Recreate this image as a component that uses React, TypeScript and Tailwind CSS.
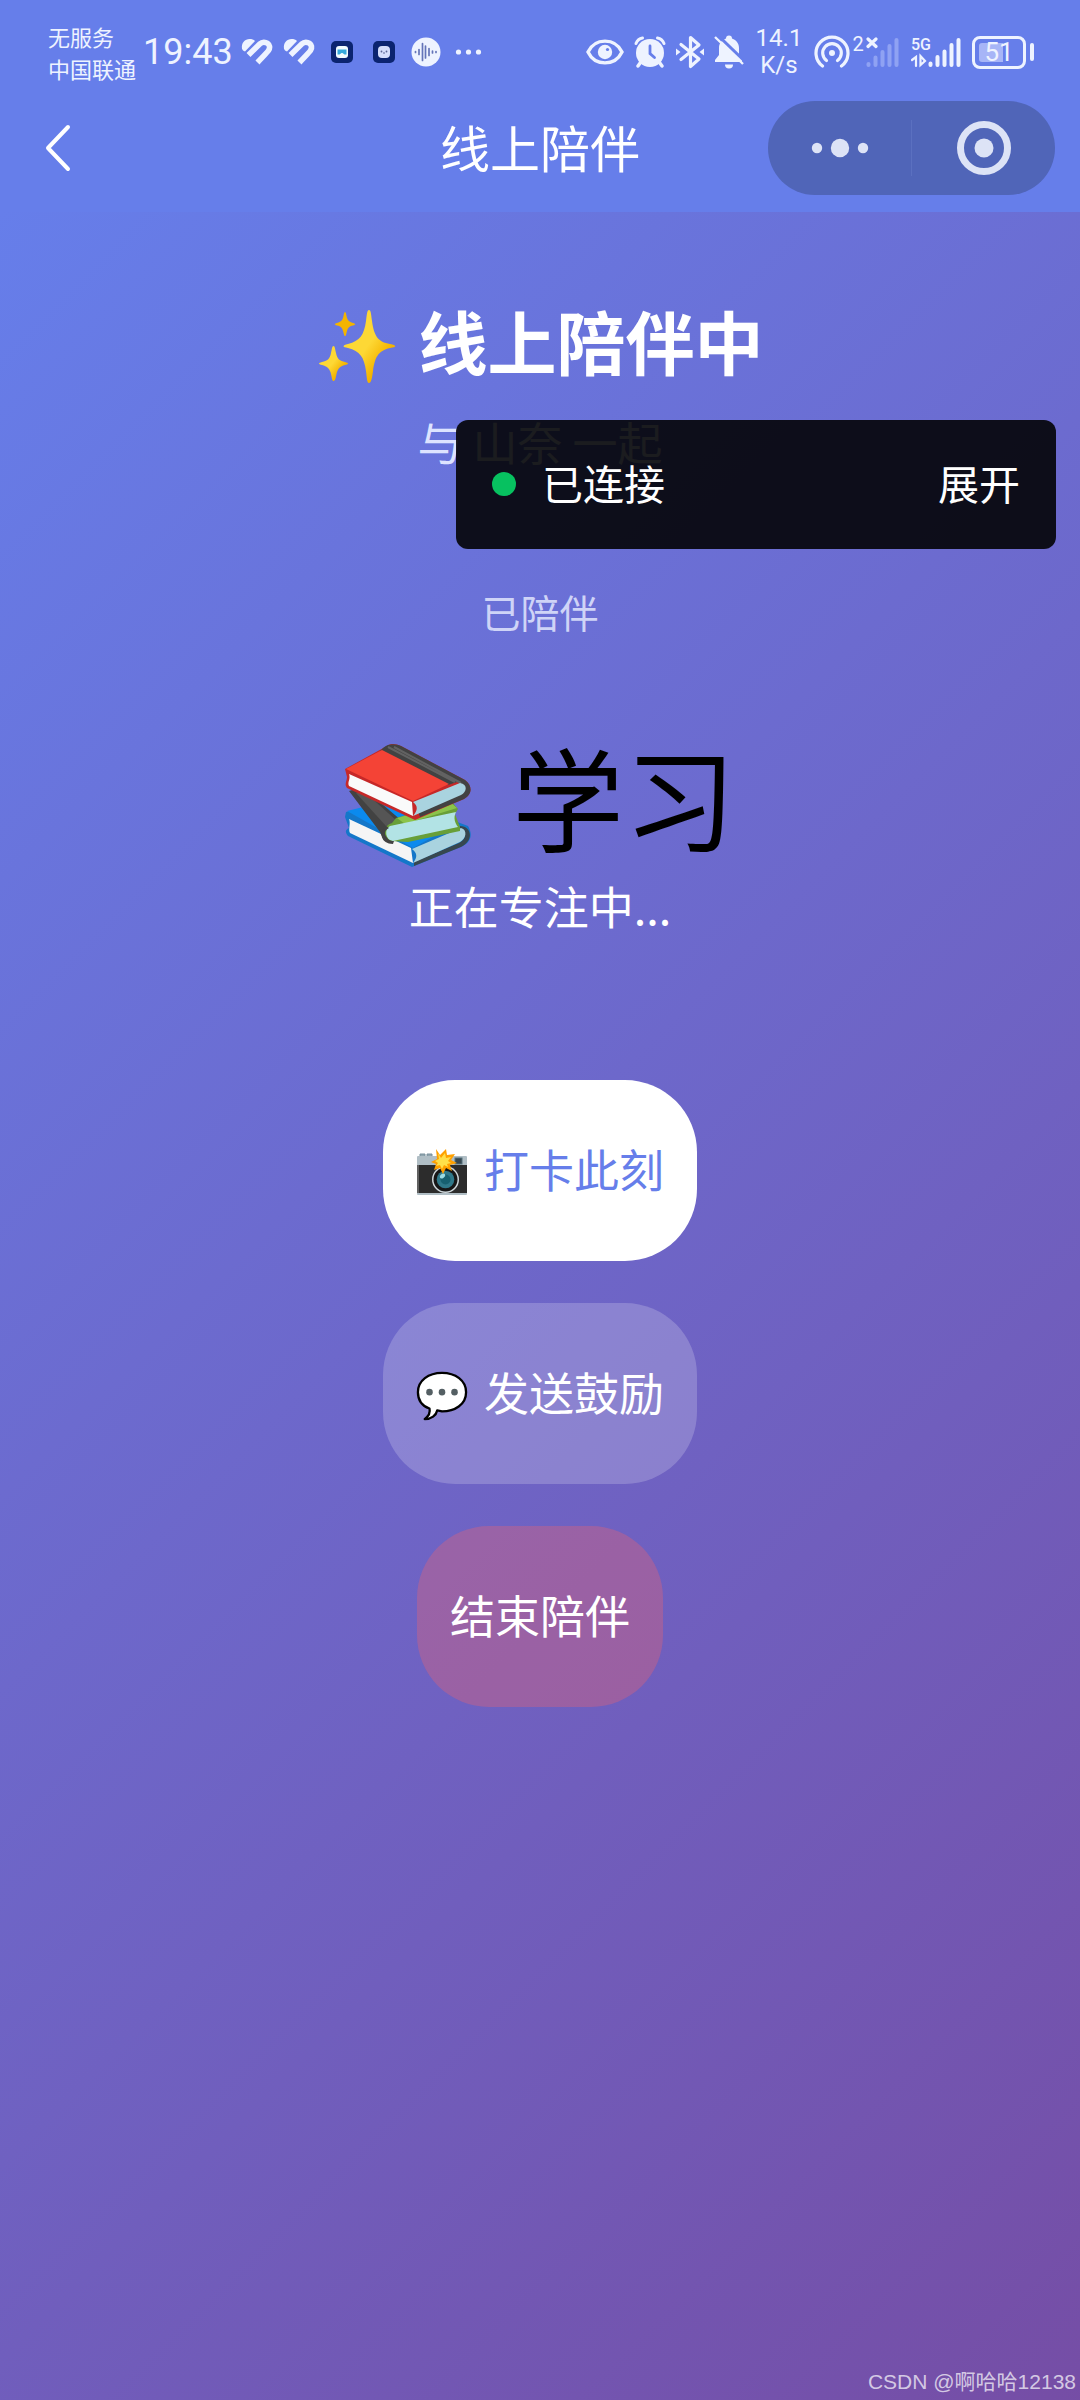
import type { ReactNode } from 'react'

interface IconProps {
  className?: string
}

function HeartIcon() {
  return (
    <svg viewBox="0 0 32 28" className="h-7 w-8" fill="none">
      <path d="M1 10.500 C0 5 4 1 8.500 1 C11 1 12.500 1.500 14 3 L4 13.500 C2.500 13 1.300 12 1 10.500Z" fill="#eef3ff" />
      <path d="M7.500 17 L19 5.800 C23.500 1.500 31.500 6.500 27.500 12.500 C26.500 14 25 15.500 16.500 24.500" stroke="#eef3ff" strokeWidth="5.600" />
    </svg>
  )
}

function RobotIcon() {
  return (
    <svg viewBox="0 0 22 22" className="h-[22px] w-[22px]">
      <rect width="22" height="22" rx="5" fill="#0b2470" />
      <rect x="5" y="5" width="12" height="12" rx="3" fill="#f1fbff" />
      <path d="M6.500 8.500h9v5h-2l-2-1.500h-1l-2 1.500h-2z" fill="#35a9dc" />
    </svg>
  )
}

function FaceIcon() {
  return (
    <svg viewBox="0 0 22 22" className="h-[22px] w-[22px]">
      <rect width="22" height="22" rx="5" fill="#0b2470" />
      <rect x="5" y="5" width="12" height="12" rx="4" fill="#d5defc" />
      <circle cx="8.500" cy="10.500" r="0.900" fill="#5b6694" />
      <circle cx="13.500" cy="10.500" r="0.900" fill="#5b6694" />
      <path d="M10 12h2" stroke="#5b6694" />
    </svg>
  )
}

function VoiceIcon() {
  return (
    <svg viewBox="0 0 30 30" className="h-[30px] w-[30px]">
      <circle cx="15" cy="15" r="14.500" fill="#eef3ff" />
      <path
        d="M4.500 14.500v1M8 12.500v5M11.500 6.500v17M14.500 9v12M18 11.500v7M21.500 14v2M25 14.500v1"
        stroke="#6474b8"
        strokeWidth="1.700"
        strokeLinecap="round"
      />
    </svg>
  )
}

function MoreIcon() {
  return (
    <svg viewBox="0 0 28 6" className="h-[6px] w-7" fill="#eef3ff">
      <circle cx="3.500" cy="3" r="2.600" />
      <circle cx="13.500" cy="3" r="2.600" />
      <circle cx="23.500" cy="3" r="2.600" />
    </svg>
  )
}

function EyeIcon() {
  return (
    <svg viewBox="0 0 38 26" className="h-[26px] w-[38px]">
      <path d="M2 13C9-1.500 29-1.500 36 13C29 27.500 9 27.500 2 13Z" fill="none" stroke="#eef3ff" strokeWidth="3.400" />
      <circle cx="19" cy="13" r="7.200" fill="#eef3ff" />
      <circle cx="21.500" cy="10.500" r="1.600" fill="#667eea" />
    </svg>
  )
}

function AlarmIcon() {
  return (
    <svg viewBox="0 0 32 32" className="h-8 w-8" fill="none" stroke="#eef3ff" strokeLinecap="round">
      <circle cx="16" cy="17" r="14" fill="#eef3ff" stroke="none" />
      <path d="M2 7.500C3 5 5.500 2.500 8.500 2M30 7.500C29 5 26.500 2.500 23.500 2" strokeWidth="3" />
      <path d="M6.500 26.500L4 30M25.500 26.500L28 30" strokeWidth="3.400" />
      <path d="M16 10v7.500l4.500 4" stroke="#667eea" strokeWidth="2.800" />
    </svg>
  )
}

function BluetoothIcon() {
  return (
    <svg viewBox="0 0 28 34" className="h-[34px] w-7" fill="none" stroke="#eef3ff" strokeWidth="3.200" strokeLinejoin="round" strokeLinecap="round">
      <path d="M5 9.500l18 14.500-8.500 7.500v-29L23 10 5 24.500" />
      <path d="M0 13.500l4.500 3.500L0 20.500zM28 13.500l-4.500 3.500 4.500 3.500z" fill="#eef3ff" stroke="none" />
    </svg>
  )
}

function BellOffIcon() {
  return (
    <svg viewBox="0 0 30 34" className="h-[34px] w-[30px]">
      <path d="M12 3.500a3 3 0 0 1 6 0C22.500 5 25 8.500 25 13v7l3 5v2H1v-2l4-5v-7C5 8.500 7.500 5 12 3.500Z" fill="#eef3ff" />
      <path d="M11 29.500h8a4 4 0 0 1-8 0Z" fill="#eef3ff" />
      <path d="M3-0.500L31 26.500" stroke="#667eea" strokeWidth="3" />
      <path d="M1 2L29 29" stroke="#eef3ff" strokeWidth="2.400" />
    </svg>
  )
}

function HotspotIcon() {
  return (
    <svg viewBox="0 0 36 34" className="h-[34px] w-9" fill="none" stroke="#eef3ff" strokeWidth="3.200" strokeLinecap="round">
      <circle cx="18" cy="18" r="3" fill="#eef3ff" stroke="none" />
      <path d="M12.500 25.500a9.300 9.300 0 1 1 11 0" />
      <path d="M8.500 31a16 16 0 1 1 19 0" />
    </svg>
  )
}

function WeakSignalIcon() {
  return (
    <svg viewBox="0 0 34 32" className="h-8 w-[34px]" fill="none" strokeLinecap="round" strokeWidth="4">
      <path d="M2.500 29v-1M9.500 29v-7.500M16.500 29v-13M23.500 29v-19M30.500 29v-25" stroke="#8fa2f3" />
      <path d="M2 3l8 7.500M10 3l-8 7.500" stroke="#eef3ff" strokeWidth="3.200" />
    </svg>
  )
}

function SignalIcon() {
  return (
    <svg viewBox="0 -4 50 40" className="h-10 w-[50px]" fill="none" strokeLinecap="round" strokeWidth="4" stroke="#eef3ff">
      <path d="M19.500 29v-1.500M26.500 29v-8M33.500 29v-13.500M40.500 29v-20M47.500 29v-25" />
      <path d="M1 24l4-3v9M9.500 20v9l4.500-4z" strokeWidth="2.200" />
      <text x="0" y="14" fontSize="16" fontWeight="500" fontFamily="Roboto" fill="#eef3ff" stroke="none">
        5G
      </text>
    </svg>
  )
}

function SparklesEmoji({ className }: IconProps) {
  return (
    <svg viewBox="0 0 80 76" className={className}>
      <defs>
        <linearGradient id="spark" x1="0" y1="0" x2="1" y2="1">
          <stop offset="0.480" stopColor="#fdd835" />
          <stop offset="0.720" stopColor="#f4b400" />
        </linearGradient>
      </defs>
      <path d="M52 1C54 1 54 5 55 12C57 27 61 33 73 35C80 36.500 80 38 73 39C61 42 58 48 56 62C55 70 54 74 52 74C50 74 50 70 49 62C47 48 43 42 31 39C25 38 25 36.500 31 35C43 32 47 26 49 12C50 5 50 1 52 1Z" fill="url(#spark)" />
      <path d="M16.500 37C18 37 18 40 19 44C20 50 23 52 28 53C32 54 32 55 28 56C23 57 20.500 60 19.500 65C18.500 70 18 72 16.500 72C15 72 15 69 14 65C13 60 10 57 5 56C1 55 1 54 5 53C10 52 13 50 14 44C15 40 15 37 16.500 37Z" fill="url(#spark)" />
      <path d="M28 3C29 3 29 5 30 9C31 12 33 13 36 14C39 15 39 15.500 36 16.500C33 17 31 18 30 22C29 26 29 27 28 27C27 27 27 25 26 22C25 18 23 17 20 16.500C17 15.500 17 15 20 14C23 13 25 12 26 9C27 5 27 3 28 3Z" fill="#f4b400" />
    </svg>
  )
}

function BooksEmoji({ className }: IconProps) {
  return (
    <svg viewBox="0 0 128 124" className={className}>
      <path d="M2 68L52 55L124 82C129 90 127 98 119 102L68 123L4 92C1 88 1 86 5 84L1 73Z" fill="#1477c9" />
      <path d="M116 82C128 82 130 97 117 103L70 122L70 118L115 99C123 95 123 87 114 86Z" fill="#37474f" />
      <path d="M3 67L48 56L112 80L69 104Z" fill="#0b8aee" />
      <path d="M5 75L67 104L69 119L6 89C4 85 7 80 5 75Z" fill="#f5f5f5" />
      <path d="M68 105L117 84C124 86 122 95 116 98L69 119C74 113 73 109 68 105Z" fill="#a9d3df" />
      <path d="M5 47L18 43L58 77L49 97C42 98 38 94 36 88Z" fill="#424242" />
      <path d="M12 49L22 49L54 78L42 82Z" fill="#555" />
      <path d="M52 74L108 58L114 65L111 70L116 83L116 87L64 98L46 97C38 90 39 82 48 79Z" fill="#689f38" />
      <path d="M53 74L107 59L113 64L61 80Z" fill="#8bc34a" />
      <path d="M46 82L112 68C109 74 111 79 114 83L49 97C41 96 40 85 46 82Z" fill="#b2e3e5" />
      <path d="M45 84C38 87 40 97 50 97L49 100C37 100 34 88 42 82Z" fill="#424242" />
      <path d="M1 25L43 2C47-1 52 0 57 2L121 36C129 42 128 51 120 55L71 76L3 44C0 40 3 37 3 33Z" fill="#c62828" />
      <path d="M39 4C45-1 52 0 57 2L121 36C129 42 128 51 120 55L76 73L74 67L116 49C124 45 120 40 113 38L104 41L36 7Z" fill="#424242" />
      <path d="M44 3L111 38M50 3L117 39" stroke="#626262" strokeWidth="2" fill="none" />
      <path d="M2 25L38 6L105 40L69 57Z" fill="#f44336" />
      <path d="M5 30L68 58L69 72L5 42C3 38 7 35 5 30Z" fill="#fafafa" />
      <path d="M69 58L116 39C124 40 123 48 117 51L69 72C74 66 74 62 69 58Z" fill="#a9d3df" />
    </svg>
  )
}

function CameraEmoji() {
  return (
    <svg viewBox="0 0 52 48" className="h-12 w-[52px]">
      <path d="M4 7V5h5v2M11 7V5h5v2" fill="#90a4ae" stroke="#78909c" />
      <rect x="1" y="7" width="50" height="39" rx="1" fill="#b0bec5" />
      <rect x="1" y="16" width="50" height="28" fill="#2c2c2c" />
      <rect x="1" y="16" width="2" height="28" fill="#616161" />
      <rect x="39" y="9" width="7" height="6" fill="#37474f" stroke="#546e7a" />
      <circle cx="29.500" cy="30.500" r="13.500" fill="#cfd8dc" />
      <circle cx="29.500" cy="30.500" r="12" fill="#171717" />
      <circle cx="29.500" cy="30.500" r="8.800" fill="#2f7889" />
      <circle cx="29.500" cy="30.500" r="5" fill="#176070" />
      <ellipse cx="26.500" cy="27" rx="3" ry="2" fill="#9adbe5" transform="rotate(-35 26.500 27)" />
      <path d="M20 0l4 6 6-6 1 6 8-1-4 6 6 3-7 2 2 6-6-3-3 6-3-6-6 2 2-6-5-2 6-3z" fill="#ffa000" />
      <path d="M22 4l3 5 4-5 1 5 5-1-3 4 3 2-4 1 1 3-4-2-2 4-2-4-4 1 2-3-3-2 4-2z" fill="#ffe04a" />
    </svg>
  )
}

function SpeechEmoji() {
  return (
    <svg viewBox="0 0 54 52" className="h-[52px] w-[52px]">
      <path
        d="M27 2C41 2 52 10 52 22C52 35 40 42 27 42L22 41C21 46 16 50 9 50C13 47 15 43 14 39C6 36 2 30 2 22C2 10 13 2 27 2Z"
        fill="#fff"
        stroke="#000"
        strokeWidth="2.400"
        strokeLinejoin="round"
      />
      <g fill="#545f63">
        <circle cx="14" cy="22" r="3.400" />
        <circle cx="27" cy="22" r="3.400" />
        <circle cx="40" cy="22" r="3.400" />
      </g>
    </svg>
  )
}

function StatusBar() {
  return (
    <div className="flex h-[104px] items-center justify-between pr-[46px] pl-12 text-[#eef3ff]">
      <div className="flex items-center">
        <div className="w-[95px] text-[22px] leading-8">
          <p>无服务</p>
          <p>中国联通</p>
        </div>
        <span className="w-[98px] font-[Roboto] text-[36px] leading-10">19:43</span>
        <div className="flex items-center gap-[10px]">
          <HeartIcon />
          <HeartIcon />
        </div>
        <div className="ml-4 flex items-center gap-5">
          <RobotIcon />
          <FaceIcon />
        </div>
        <div className="ml-4 flex items-center gap-[14px]">
          <VoiceIcon />
          <MoreIcon />
        </div>
      </div>
      <div className="flex items-center">
        <div className="flex items-center gap-[10px]">
          <EyeIcon />
          <AlarmIcon />
          <BluetoothIcon />
          <BellOffIcon />
        </div>
        <div className="w-[70px] text-center font-[Roboto] text-[24px] leading-[27px]">
          <p>14.1</p>
          <p>K/s</p>
        </div>
        <HotspotIcon />
        <span className="mb-4 w-4 text-center font-[Roboto] text-[20px] leading-5">2</span>
        <div className="flex items-center gap-[11px]">
          <WeakSignalIcon />
          <SignalIcon />
          <div className="flex items-center gap-1">
            <div className="relative flex h-[33px] w-[54px] items-center justify-center rounded-[8px] border-3 border-[#eef3ff]">
              <div className="absolute top-1 left-1 h-[19px] w-6 rounded-l-[3px] bg-[#a7b5f7]" />
              <span className="relative font-[Roboto] text-[26px] leading-7">51</span>
            </div>
            <div className="h-[18px] w-1 rounded-[2px] bg-[#eef3ff]" />
          </div>
        </div>
      </div>
    </div>
  )
}

function NavBar() {
  return (
    <div className="grid h-[108px] grid-cols-[1fr_auto_1fr] items-start">
      <button aria-label="返回" className="ml-11 h-[88px] w-7">
        <svg viewBox="0 0 28 48" className="h-12 w-7" fill="none" stroke="#fff" strokeWidth="4" strokeLinecap="round" strokeLinejoin="round">
          <path d="M24 3L4 24l20 21" />
        </svg>
      </button>
      <span className="text-[50px] leading-[84px] text-white">线上陪伴</span>
      <div className="-mt-[3px] mr-[25px] flex h-[94px] w-[287px] items-center justify-self-end rounded-full bg-[#5065b8]">
        <button aria-label="更多" className="flex flex-1 justify-center">
          <svg viewBox="0 0 60 20" className="h-5 w-[60px]" fill="#dde3f6">
            <circle cx="7" cy="10" r="5.200" />
            <circle cx="30" cy="10" r="9.200" />
            <circle cx="53" cy="10" r="5.200" />
          </svg>
        </button>
        <div className="h-14 w-px bg-[#5b70c0]" />
        <button aria-label="关闭" className="flex flex-1 justify-center">
          <svg viewBox="0 0 56 56" className="h-14 w-14">
            <circle cx="28" cy="28" r="23.500" fill="none" stroke="#dde3f6" strokeWidth="7" />
            <circle cx="28" cy="28" r="9.500" fill="#dde3f6" />
          </svg>
        </button>
      </div>
    </div>
  )
}

interface ActionButtonProps {
  icon?: ReactNode
  label: string
  className: string
}

function ActionButton({ icon, label, className }: ActionButtonProps) {
  return (
    <button className={`flex h-[181px] items-center gap-4 rounded-[72px] px-[33px] text-[45px] leading-[60px] ${className}`}>
      {icon && <span className="pt-1">{icon}</span>}
      <span className="pb-1">{label}</span>
    </button>
  )
}

function ConnectionToast() {
  return (
    <div className="absolute top-[420px] right-6 flex h-[129px] w-[600px] items-center rounded-xl bg-black/88 px-9 pb-0.5 text-[41px] leading-[60px] text-white">
      <span className="mr-[26px] h-6 w-6 rounded-full bg-[#07c160]" />
      <span className="pb-1">已连接</span>
      <button className="ml-auto pb-1">展开</button>
    </div>
  )
}

export default function App() {
  return (
    <div className="relative flex min-h-screen flex-col font-['Noto_Sans_CJK_SC',sans-serif]">
      <header className="bg-[#667eea]">
        <StatusBar />
        <NavBar />
      </header>

      <main className="flex flex-1 flex-col items-center bg-linear-[135deg,#667eea,#764ba2_105%] pt-[83px] text-white">
        <h1 className="flex items-end gap-[22px] text-[69px] leading-[90px] font-bold">
          <SparklesEmoji className="h-[76px] w-20" />
          线上陪伴中
        </h1>
        <p className="mt-[27px] text-[45px] leading-[60px] text-[#dde3ff]">与 山奈 一起</p>
        <p className="mt-[109px] text-[39px] leading-[60px] text-[#cfd4f7]">已陪伴</p>
        <div className="mt-[81px] flex items-end gap-10 text-[112px] leading-[146px] text-black">
          <BooksEmoji className="h-[124px] w-32" />
          学习
        </div>
        <p className="mt-2 text-[45px] leading-[60px]">正在专注中...</p>

        <div className="mt-[144px] flex flex-col items-center gap-[42px]">
          <ActionButton icon={<CameraEmoji />} label="打卡此刻" className="bg-white text-[#667eea]" />
          <ActionButton icon={<SpeechEmoji />} label="发送鼓励" className="bg-white/20" />
          <ActionButton label="结束陪伴" className="bg-[#ff6464]/30" />
        </div>

        <footer className="mt-auto self-end pr-1 pb-1 font-['Liberation_Sans','Noto_Sans_CJK_SC',sans-serif] text-[21px] leading-7 text-white/70">
          CSDN @啊哈哈12138
        </footer>
      </main>

      <ConnectionToast />
    </div>
  )
}
